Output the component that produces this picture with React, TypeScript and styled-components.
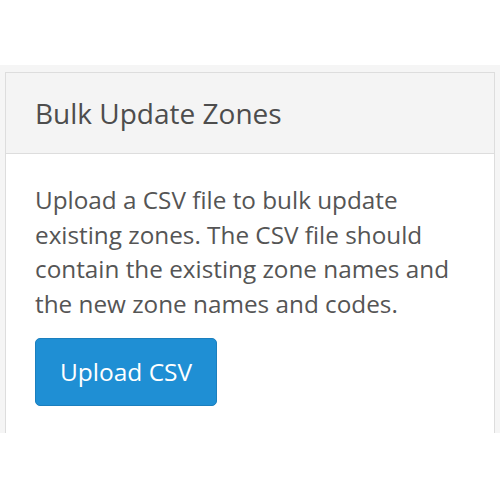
import React from "react";
import styled, { createGlobalStyle } from "styled-components";

const Global = createGlobalStyle`
  html, body { margin: 0; padding: 0; background: #fff; }
  body { font-family: "Open Sans", "Liberation Sans", sans-serif; }
`;

const Page = styled.div`
  width: 500px;
  height: 500px;
  padding-top: 65px;
  box-sizing: border-box;
  background: #fff;
`;

const Wrapper = styled.div`
  background: #f5f5f5;
  height: 368px;
  padding: 7px 5px 0 5px;
  box-sizing: border-box;
`;

const Panel = styled.section`
  background: #fff;
  border: 1px solid #dddddd;
  border-bottom: none;
  height: 100%;
  box-sizing: border-box;
`;

const Header = styled.header`
  background: #f4f4f4;
  border-bottom: 1px solid #dddddd;
  height: 81px;
  box-sizing: border-box;
  display: flex;
  align-items: center;
  padding: 0 29px;
`;

const Title = styled.h3`
  margin: 0;
  font-size: 28px;
  font-weight: 400;
  color: #4d4d4d;
`;

const Body = styled.div`
  padding: 29px 29px 0;
`;

const Text = styled.p`
  margin: 0 0 16px;
  font-size: 24.3px;
  line-height: 34.7px;
  color: #555555;
`;

const Button = styled.button`
  width: 182px;
  height: 68px;
  background: #1f8fd4;
  border: 1px solid #1b7fbe;
  border-radius: 5px;
  color: #fff;
  font-family: "Open Sans", "Liberation Sans", sans-serif;
  font-size: 24.5px;
  padding: 0;
  cursor: pointer;
`;

export default function App() {
  return (
    <Page>
      <Global />
      <Wrapper>
        <Panel>
          <Header>
            <Title>Bulk Update Zones</Title>
          </Header>
          <Body>
            <Text>
              Upload a CSV file to bulk update existing zones. The CSV file should contain the
              existing zone names and the new zone names and codes.
            </Text>
            <Button>Upload CSV</Button>
          </Body>
        </Panel>
      </Wrapper>
    </Page>
  );
}
